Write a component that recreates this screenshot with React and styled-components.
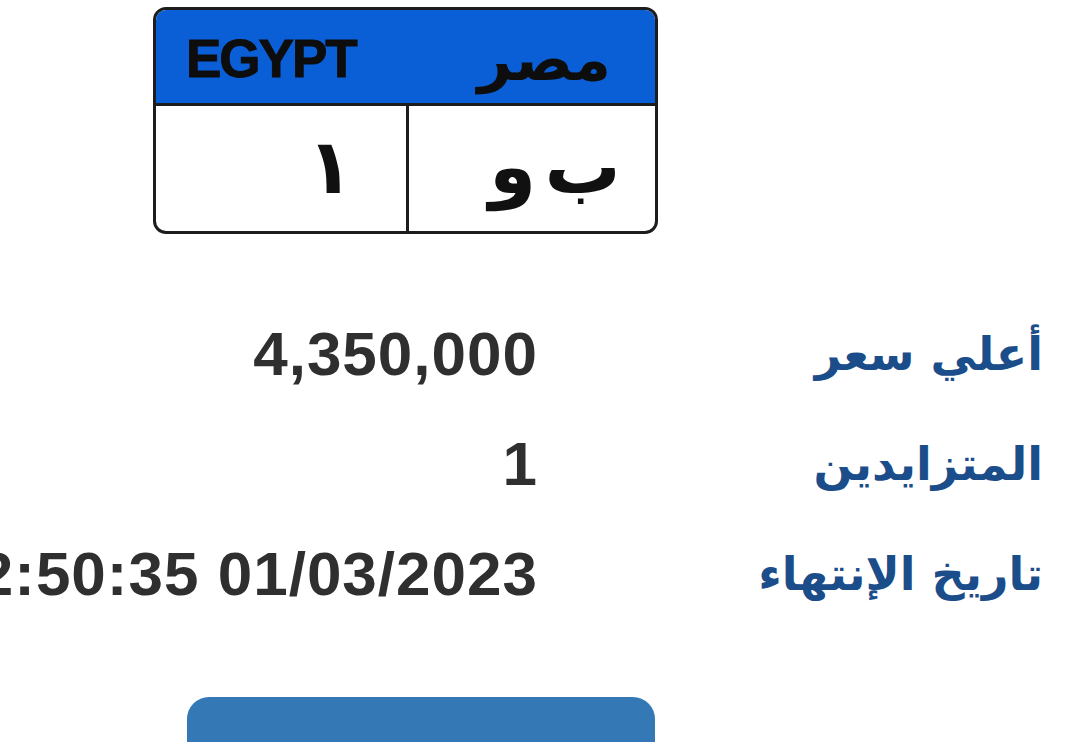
import React from 'react'
import styled, {createGlobalStyle} from 'styled-components'

const GlobalStyle = createGlobalStyle`
    html, body {
        margin: 0;
        padding: 0;
        background: #ffffff;
        overflow: hidden;
    }
`;

const StyledPage = styled.div`
    width: 1080px;
    height: 742px;
    overflow: hidden;
    display: flex;
    flex-direction: column;
    background: #ffffff;
`;

const StyledPlateRow = styled.div`
    padding: 7px 0 0 153px;
    display: flex;
`;

const StyledPlate = styled.div`
    width: 505px;
    height: 227px;
    box-sizing: border-box;
    border: 3px solid #1d1d1d;
    border-radius: 13px;
    overflow: hidden;
    display: grid;
    grid-template-rows: 96px 1fr;
    grid-template-columns: 1fr 1fr;
    background: #ffffff;
`;

const StyledPlateHeader = styled.div`
    grid-column: 1 / span 2;
    background-color: #0b5fd6;
    border-bottom: 3px solid #1d1d1d;
    display: flex;
    align-items: center;
    justify-content: space-between;
    padding: 0 44px 0 30px;
`;

const StyledCountry = styled.span`
    font-family: "Liberation Sans", Arial, sans-serif;
    font-weight: 700;
    font-size: 53px;
    letter-spacing: -2px;
    color: #0d0d0d;
    margin-top: 4px;
    -webkit-text-stroke: 1px #0d0d0d;
`;

const StyledArabic = styled.span`
    font-family: "DejaVu Sans", sans-serif;
    font-weight: 700;
    font-size: 60px;
    color: #0d0d0d;
    direction: rtl;
    margin-top: 4px;
`;

const StyledPlateCell = styled.div`
    display: flex;
    align-items: center;
    justify-content: flex-end;
    padding-right: ${p => p.pad}px;
    border-left: ${p => p.divided ? '3px solid #1d1d1d' : 'none'};
    padding-bottom: 4px;
`;

const StyledPlateChar = styled.span`
    font-family: "DejaVu Sans", sans-serif;
    font-weight: 700;
    font-size: 76px;
    color: #111;
    direction: rtl;
    word-spacing: -18px;
`;

const StyledInfo = styled.div`
    margin-top: 65px;
    display: grid;
    grid-template-columns: 538px 505px;
    grid-auto-rows: 110px;
`;

const StyledValue = styled.div`
    display: flex;
    justify-content: flex-end;
    white-space: nowrap;
    font-family: "Liberation Sans", Arial, sans-serif;
    font-weight: 700;
    font-size: 62px;
    letter-spacing: 1px;
    line-height: 110px;
    color: #2f2f2f;
`;

const StyledLabel = styled.div`
    display: flex;
    justify-content: flex-end;
    white-space: nowrap;
    direction: ltr;
    font-family: "DejaVu Sans", sans-serif;
    font-weight: 700;
    font-size: 46px;
    line-height: 110px;
    color: #1b4d8a;
`;

const StyledButtonRow = styled.div`
    margin-top: 68px;
    padding-left: 187px;
    display: flex;
`;

const StyledButton = styled.button`
    width: 468px;
    height: 90px;
    border: none;
    border-radius: 22px;
    background-color: #3479b6;
    cursor: pointer;
`;

const rows = [
    {label: 'أعلي سعر', value: '4,350,000'},
    {label: 'المتزايدين', value: '1'},
    {label: 'تاريخ الإنتهاء', value: '12:50:35 01/03/2023'},
];

export default function App() {
    return (
        <StyledPage>
            <GlobalStyle />
            <StyledPlateRow>
                <StyledPlate>
                    <StyledPlateHeader>
                        <StyledCountry>EGYPT</StyledCountry>
                        <StyledArabic>مصر</StyledArabic>
                    </StyledPlateHeader>
                    <StyledPlateCell pad={52}>
                        <StyledPlateChar>١</StyledPlateChar>
                    </StyledPlateCell>
                    <StyledPlateCell pad={34} divided>
                        <StyledPlateChar>ب و</StyledPlateChar>
                    </StyledPlateCell>
                </StyledPlate>
            </StyledPlateRow>

            <StyledInfo>
                {rows.map((row, key) =>
                    <React.Fragment key={key}>
                        <StyledValue><span>{row.value}</span></StyledValue>
                        <StyledLabel><span dir="rtl">{row.label}</span></StyledLabel>
                    </React.Fragment>
                )}
            </StyledInfo>

            <StyledButtonRow>
                <StyledButton />
            </StyledButtonRow>
        </StyledPage>
    )
}
